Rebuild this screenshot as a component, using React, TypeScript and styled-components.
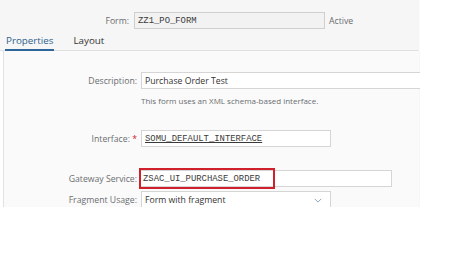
import * as React from "react";
import styled, { createGlobalStyle } from "styled-components";

const GlobalStyle = createGlobalStyle`
    html, body {
        margin: 0;
        padding: 0;
        background: #ffffff;
    }
    body {
        font-family: "Open Sans", "Liberation Sans", Arial, sans-serif;
        color: #333333;
    }
`;

const App: React.FC = () => {
    return (
        <>
            <GlobalStyle />
            <Page>
                <Header>
                    <FormLine>
                        <HeaderLabel>Form:</HeaderLabel>
                        <Field width="191px" readOnly>
                            <Mono>ZZ1_PO_FORM</Mono>
                        </Field>
                        <Status>Active</Status>
                    </FormLine>
                    <Tabs>
                        <Tab active>Properties</Tab>
                        <Tab>Layout</Tab>
                    </Tabs>
                </Header>
                <Content>
                    <Row>
                        <Label>Description:</Label>
                        <Field width="290px" open>
                            <Text>Purchase Order Test</Text>
                        </Field>
                    </Row>
                    <Hint>This form uses an XML schema-based interface.</Hint>
                    <Row top="22px">
                        <Label>
                            Interface: <Req>*</Req>
                        </Label>
                        <Field width="190px">
                            <Mono underline>SOMU_DEFAULT_INTERFACE</Mono>
                        </Field>
                    </Row>
                    <Row top="23px">
                        <Label>Gateway Service:</Label>
                        <Field width="253px" shift="-2px">
                            <Mono>ZSAC_UI_PURCHASE_ORDER</Mono>
                            <Highlight />
                        </Field>
                    </Row>
                    <Row top="4px">
                        <Label>Fragment Usage:</Label>
                        <Field width="190px">
                            <Text>Form with fragment</Text>
                            <Chevron viewBox="0 0 10 6">
                                <path d="M1 1 L5 5 L9 1" fill="none" stroke="#6f8fb0" strokeWidth="1" />
                            </Chevron>
                        </Field>
                    </Row>
                </Content>
            </Page>
        </>
    );
};

const Page = styled.div`
    width: 420px;
    overflow: hidden;
`;

const Header = styled.div`
    height: 50px;
    width: 418px;
    background: #f6f6f6;
    border-bottom: 1px solid #e4e4e4;
    box-shadow: 1px 0 2px rgba(0, 0, 0, 0.06);
    display: flex;
    flex-direction: column;
    justify-content: space-between;
`;

const FormLine = styled.div`
    display: flex;
    align-items: center;
    padding-top: 12px;
`;

const HeaderLabel = styled.div`
    width: 129px;
    text-align: right;
    font-size: 8.7px;
    color: #6a6d70;
    margin-right: 5px;
`;

const Status = styled.div`
    font-size: 8.7px;
    color: #6a6d70;
    margin-left: 4px;
`;

const Tabs = styled.div`
    display: flex;
    padding-left: 5px;
    gap: 18px;
`;

const Tab = styled.div<{ active?: boolean }>`
    font-size: 9.8px;
    line-height: 13px;
    padding: 0 1px 2px;
    color: ${p => (p.active ? "#2c5e8d" : "#333333")};
    border-bottom: 2px solid ${p => (p.active ? "#2f6699" : "transparent")};
    margin-bottom: -1px;
`;

const Content = styled.div`
    margin-left: 3px;
    width: 416px;
    height: 156px;
    padding-top: 21px;
    box-sizing: border-box;
    background: #fafafa;
    border-left: 1px solid #e2e2e2;
    box-shadow: 1px 0 2px rgba(0, 0, 0, 0.05);
`;

const Row = styled.div<{ top?: string }>`
    display: flex;
    align-items: center;
    margin-top: ${p => p.top || "0"};
`;

const Label = styled.div`
    width: 133px;
    flex: none;
    text-align: right;
    font-size: 8.7px;
    color: #6a6d70;
    margin-right: 4px;
    white-space: nowrap;
`;

const Req = styled.span`
    color: #d0202c;
`;

const Field = styled.div<{ width: string; readOnly?: boolean; open?: boolean; shift?: string }>`
    position: relative;
    flex: none;
    box-sizing: border-box;
    width: ${p => p.width};
    height: 17px;
    margin-left: ${p => p.shift || "0"};
    padding-left: 3px;
    display: flex;
    align-items: center;
    background: ${p => (p.readOnly ? "#f2f2f2" : "#ffffff")};
    border: 1px solid ${p => (p.readOnly ? "#cfcfcf" : "#d5d5d5")};
    border-right: ${p => (p.open ? "none" : undefined)};
`;

const Text = styled.span`
    font-size: 8.7px;
    color: #333333;
    white-space: nowrap;
`;

const Mono = styled.span<{ underline?: boolean }>`
    font-family: "Liberation Mono", "DejaVu Sans Mono", monospace;
    font-size: 8.9px;
    color: #3a3a3a;
    white-space: nowrap;
    text-decoration: ${p => (p.underline ? "underline" : "none")};
`;

const Hint = styled.div`
    margin: 5px 0 0 137px;
    font-size: 8px;
    line-height: 14px;
    color: #6a6d70;
`;

const Highlight = styled.div`
    position: absolute;
    left: -1px;
    top: -3px;
    width: 136px;
    height: 21px;
    border: 2px solid #d0202c;
    box-sizing: border-box;
`;

const Chevron = styled.svg`
    position: absolute;
    right: 8px;
    top: 6px;
    width: 8px;
    height: 5px;
`;

export default App;
